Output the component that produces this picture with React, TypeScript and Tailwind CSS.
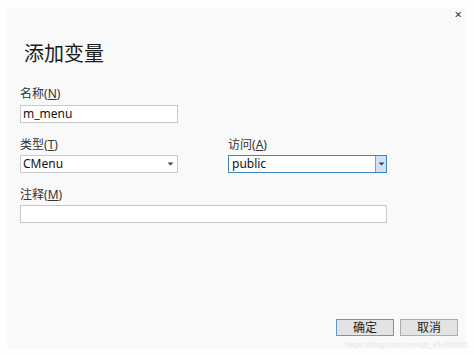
const font = "font-['Noto_Sans','Noto_Sans_CJK_SC',sans-serif]";

const Label = ({ text, hot }: { text: string; hot: string }) => (
  <p className="text-[12px] leading-[16px] text-[#333]">
    {text}(<span className="underline underline-offset-1">{hot}</span>)
  </p>
);

const Arrow = () => (
  <svg width="7" height="4" viewBox="0 0 7 4">
    <path d="M0.5 0.5h6L3.5 3.5z" fill="#444" />
  </svg>
);

export default function App() {
  return (
    <div className={`w-[474px] h-[355px] bg-[#fefefe] pt-[8px] pl-[7px] pr-[9px] pb-[6px] relative ${font}`}>
      <div className="h-full bg-[#f9f9f9] flex flex-col">
        <div className="flex justify-end pr-[3px] h-[12px]">
          <span className="text-[13px] leading-[12px] text-[#333]">×</span>
        </div>

        <h1 className="mt-[20px] ml-[17px] text-[20px] leading-[28px] text-[#1a1a1a]">添加变量</h1>

        <div className="pl-[13px] mt-[18px]">
          <Label text="名称" hot="N" />
          <div className="mt-[3px] w-[158px] h-[18px] bg-white border border-[#c9c9c9] flex items-center px-[2px] text-[12px] text-[#111]">
            m_menu
          </div>

          <div className="mt-[14px] flex gap-[50px]">
            <div>
              <Label text="类型" hot="T" />
              <div className="mt-[2px] w-[158px] h-[18px] bg-white border border-[#c9c9c9] flex items-center justify-between pl-[2px] pr-[3px] text-[12px] text-[#111]">
                <span>CMenu</span>
                <Arrow />
              </div>
            </div>
            <div>
              <Label text="访问" hot="A" />
              <div className="mt-[2px] w-[159px] h-[18px] bg-white border border-[#3f86c4] flex items-stretch text-[12px] text-[#111]">
                <span className="flex-1 flex items-center pl-[3px]">public</span>
                <span className="w-[11px] bg-[#cfe2f5] border-l border-[#6fa3d6] flex items-center justify-center">
                  <Arrow />
                </span>
              </div>
            </div>
          </div>

          <div className="mt-[14px]">
            <Label text="注释" hot="M" />
            <div className="mt-[2px] w-[367px] h-[18px] bg-white border border-[#c9c9c9]" />
          </div>
        </div>

        <div className="mt-auto mb-[13px] flex justify-end gap-[6px] pr-[7px]">
          <button className="w-[58px] h-[17px] bg-[#e3e3e3] border border-[#5b9bd8] text-[12px] leading-[15px] text-[#222]">确定</button>
          <button className="w-[58px] h-[17px] bg-[#e3e3e3] border border-[#adadad] text-[12px] leading-[15px] text-[#222]">取消</button>
        </div>
      </div>

      <span className="absolute right-[6px] bottom-[5px] text-[8px] leading-[10px] text-[#e6e6e6] font-['Liberation_Sans',sans-serif]">
        https://blog.csdn.net/qq_41496261
      </span>
    </div>
  );
}
